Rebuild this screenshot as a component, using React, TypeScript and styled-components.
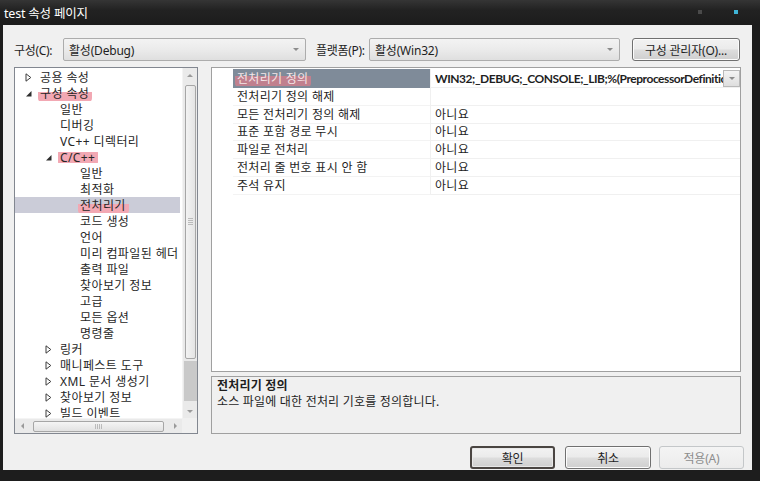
import React from "react";
import styled, { createGlobalStyle, css } from "styled-components";

const Global = createGlobalStyle`
  html, body { margin: 0; padding: 0; background: #1d1d1d; }
  body { width: 760px; height: 481px; overflow: hidden; }
  * { box-sizing: border-box; }
`;

const UI_FONT = `"Noto Sans", "Noto Sans CJK KR", sans-serif`;

const Window = styled.div`
  width: 760px;
  height: 481px;
  display: flex;
  flex-direction: column;
  background: #1d1d1d;
  font-family: ${UI_FONT};
  font-size: 12px;
  color: #1e1e1e;
`;

const TitleBar = styled.div`
  height: 25px;
  flex: none;
  display: flex;
  align-items: center;
  padding: 0 0 1px 4px;
  background: linear-gradient(#353535, #222 40%, #1c1c1c);
  color: #fff;
  font-size: 12.5px;
  letter-spacing: -0.2px;
`;

const TitleText = styled.span`
  flex: 1;
`;

const TitleDot = styled.span<{ $tone: string; $gap: number }>`
  width: 4px;
  height: 4px;
  margin-right: ${(p) => p.$gap}px;
  background: ${(p) => p.$tone};
`;

const Body = styled.div`
  height: 445px;
  flex: none;
  margin: 0 8px 0 3px;
  background: #f0f0f0;
  padding: 13px 11px 0 11px;
  display: flex;
  flex-direction: column;
`;

const TopRow = styled.div`
  height: 23px;
  display: flex;
  align-items: center;
`;

const Label = styled.span<{ $w: number; $lead?: number }>`
  width: ${(p) => p.$w}px;
  padding-left: ${(p) => p.$lead ?? 0}px;
  flex: none;
  white-space: nowrap;
  letter-spacing: -0.3px;
`;

const Combo = styled.div<{ $w: number }>`
  width: ${(p) => p.$w}px;
  height: 23px;
  flex: none;
  display: flex;
  align-items: center;
  padding: 0 6px 0 5px;
  border: 1px solid #acacac;
  border-radius: 2px;
  background: linear-gradient(#f3f3f3, #ebebeb 50%, #dfdfdf);
  letter-spacing: -0.2px;
`;

const ComboText = styled.span`
  flex: 1;
`;

const SmallArrow = styled.span`
  width: 0;
  height: 0;
  border-left: 3px solid transparent;
  border-right: 3px solid transparent;
  border-top: 3px solid #8c8c8c;
`;

const PushButton = styled.div<{ $w: number; $default?: boolean; $disabled?: boolean; $lead?: number }>`
  width: ${(p) => p.$w}px;
  height: 23px;
  flex: none;
  margin-left: ${(p) => p.$lead ?? 0}px;
  display: flex;
  align-items: center;
  justify-content: center;
  border: 1px solid #707070;
  border-radius: 3px;
  background: linear-gradient(#f2f2f2, #ebebeb 48%, #dddddd 52%, #cfcfcf);
  box-shadow: inset 0 0 0 1px #fcfcfc;
  letter-spacing: -0.2px;
  ${(p) =>
    p.$default &&
    css`
      border: 2px solid #4a4542;
      box-shadow: inset 0 0 0 1px #e8e8e8;
    `}
  ${(p) =>
    p.$disabled &&
    css`
      border-color: #c4c7c9;
      background: linear-gradient(#f4f4f4, #ececec);
      box-shadow: none;
      color: #8d8d8d;
    `}
`;

const Main = styled.div`
  margin-top: 6px;
  height: 367px;
  display: flex;
  gap: 13px;
`;

/* ---------- tree ---------- */

const TreeBox = styled.div`
  width: 184px;
  flex: none;
  border: 1px solid #828790;
  background: #fff;
  display: grid;
  grid-template-columns: 1fr 15px;
  grid-template-rows: 1fr 15px;
`;

const TreeList = styled.div`
  overflow: hidden;
  padding-top: 1px;
`;

const TreeRow = styled.div<{ $level: number; $selected?: boolean }>`
  height: 16px;
  display: flex;
  align-items: center;
  padding-left: ${(p) => 10 + p.$level * 20}px;
  margin-right: 2px;
  white-space: nowrap;
  color: #262626;
  letter-spacing: 0.4px;
  background: ${(p) => (p.$selected ? "#cbccd8" : "transparent")};
`;

const Toggle = styled.span`
  width: 15px;
  height: 16px;
  flex: none;
  display: flex;
  align-items: center;
`;

const Marked = styled.span<{ $band: string }>`
  border-radius: 4px;
  margin-left: -2px;
  padding: 0 3px 0 2px;
  background: ${(p) => p.$band};
`;

const VScroll = styled.div`
  background: #eaeaea;
  display: flex;
  flex-direction: column;
  align-items: center;
  border-left: 1px solid #f4f4f4;
`;

const ScrollArrow = styled.div`
  height: 15px;
  width: 15px;
  flex: none;
  display: flex;
  align-items: center;
  justify-content: center;
`;

const VThumb = styled.div`
  margin-top: 2px;
  width: 11px;
  height: 274px;
  flex: none;
  border: 1px solid #a6a6a6;
  border-radius: 2px;
  background: linear-gradient(90deg, #f3f3f3, #e4e4e4);
  display: flex;
  align-items: center;
  justify-content: center;
`;

const VTrackPressed = styled.div`
  width: 13px;
  flex: 1;
  background: #c9c9c9;
  margin: 2px 0;
`;

const HScroll = styled.div`
  background: #eaeaea;
  display: flex;
  align-items: center;
  border-top: 1px solid #f4f4f4;
`;

const HThumb = styled.div`
  margin-left: 3px;
  width: 131px;
  height: 11px;
  border: 1px solid #a6a6a6;
  border-radius: 2px;
  background: linear-gradient(#f5f5f5, #e2e2e2);
  display: flex;
  align-items: center;
  justify-content: center;
`;

const HSpacer = styled.span`
  flex: 1;
`;

const Grip = styled.span<{ $vertical?: boolean }>`
  width: ${(p) => (p.$vertical ? 5 : 8)}px;
  height: ${(p) => (p.$vertical ? 8 : 5)}px;
  background: repeating-linear-gradient(
    ${(p) => (p.$vertical ? "180deg" : "90deg")},
    #9a9a9a 0 1px,
    transparent 1px 2px
  );
  opacity: 0.6;
`;

const Corner = styled.div`
  background: #f0f0f0;
`;

/* ---------- property grid ---------- */

const RightCol = styled.div`
  flex: 1;
  display: flex;
  flex-direction: column;
  gap: 4px;
`;

const GridBox = styled.div`
  height: 305px;
  flex: none;
  border: 1px solid #a0a0a0;
  background: #fff;
  padding-top: 1px;
`;

const PropRow = styled.div`
  height: 17.8px;
  display: grid;
  grid-template-columns: 21px 198px 1fr;
`;

const Gutter = styled.div`
  background: #fff;
`;

const NameCell = styled.div<{ $selected?: boolean }>`
  display: flex;
  align-items: center;
  padding-left: 4px;
  white-space: nowrap;
  letter-spacing: 0.3px;
  border-bottom: 1px solid #f3f3f3;
  border-right: 1px solid #f0f0f0;
  ${(p) =>
    p.$selected &&
    css`
      background: #7f8b99;
      color: #f4e6e8;
      border-bottom-color: #7f8b99;
    `}
`;

const ValueCell = styled.div<{ $strong?: boolean }>`
  display: flex;
  align-items: center;
  padding-left: 4px;
  white-space: nowrap;
  overflow: hidden;
  border-bottom: 1px solid #f0f0f0;
  letter-spacing: 0.3px;
  ${(p) =>
    p.$strong &&
    css`
      font-family: Lato, "Noto Sans", sans-serif;
      font-weight: 700;
      font-size: 12px;
      letter-spacing: -0.45px;
    `}
`;

const ValueText = styled.span`
  flex: 1;
  overflow: hidden;
`;

const CellDrop = styled.span`
  width: 17px;
  height: 17px;
  flex: none;
  display: flex;
  align-items: center;
  justify-content: center;
  border: 1px solid #b9b9b9;
  background: linear-gradient(#f4f4f4, #dedede);
`;

const DescBox = styled.div`
  height: 58px;
  flex: none;
  border: 1px solid #a0a0a0;
  background: #f0f0f0;
  padding: 1px 5px;
  line-height: 16px;
`;

const DescTitle = styled.div`
  font-weight: 700;
  letter-spacing: 0.2px;
`;

const DescText = styled.div`
  letter-spacing: 0.2px;
`;

const ButtonRow = styled.div`
  margin: 12px -3px 0 0;
  display: flex;
  justify-content: flex-end;
  gap: 10px;
`;

const Spacer = styled.span<{ $w: number }>`
  width: ${(p) => p.$w}px;
  flex: none;
`;

/* ---------- small drawings ---------- */

const Collapsed = () => (
  <svg width="7" height="9" viewBox="0 0 7 9">
    <path d="M1 0.8 L5.8 4.5 L1 8.2 Z" fill="#fff" stroke="#3c3c3c" strokeWidth="1" />
  </svg>
);

const Expanded = () => (
  <svg width="7" height="9" viewBox="0 0 7 9">
    <path d="M6.5 2 L6.5 7.5 L1 7.5 Z" fill="#2e2e2e" />
  </svg>
);

const TinyArrow = ({ dir }: { dir: "up" | "down" | "left" | "right" }) => {
  const d = {
    up: "M1 5 L4 2 L7 5 Z",
    down: "M1 3 L4 6 L7 3 Z",
    left: "M5 1 L2 4 L5 7 Z",
    right: "M3 1 L6 4 L3 7 Z",
  }[dir];
  return (
    <svg width="8" height="8" viewBox="0 0 8 8">
      <path d={d} fill="#9a9a9a" />
    </svg>
  );
};

type Node = {
  label: string;
  level: number;
  toggle?: "open" | "closed";
  selected?: boolean;
  band?: string;
};

const PINK = "#f2a8b3";
const bandLow = `linear-gradient(transparent 45%, ${PINK} 45%, ${PINK} 95%, transparent 95%)`;
const bandMid = `linear-gradient(transparent 15%, ${PINK} 15%, ${PINK} 85%, transparent 85%)`;
const bandOnSlate = "linear-gradient(transparent 40%, #c0808e 40%, #c0808e 95%, transparent 95%)";

const nodes: Node[] = [
  { label: "공용 속성", level: 0, toggle: "closed" },
  { label: "구성 속성", level: 0, toggle: "open", band: bandLow },
  { label: "일반", level: 1 },
  { label: "디버깅", level: 1 },
  { label: "VC++ 디렉터리", level: 1 },
  { label: "C/C++", level: 1, toggle: "open", band: bandMid },
  { label: "일반", level: 2 },
  { label: "최적화", level: 2 },
  { label: "전처리기", level: 2, selected: true, band: bandLow },
  { label: "코드 생성", level: 2 },
  { label: "언어", level: 2 },
  { label: "미리 컴파일된 헤더", level: 2 },
  { label: "출력 파일", level: 2 },
  { label: "찾아보기 정보", level: 2 },
  { label: "고급", level: 2 },
  { label: "모든 옵션", level: 2 },
  { label: "명령줄", level: 2 },
  { label: "링커", level: 1, toggle: "closed" },
  { label: "매니페스트 도구", level: 1, toggle: "closed" },
  { label: "XML 문서 생성기", level: 1, toggle: "closed" },
  { label: "찾아보기 정보", level: 1, toggle: "closed" },
  { label: "빌드 이벤트", level: 1, toggle: "closed" },
];

const props: [string, string][] = [
  ["전처리기 정의", "WIN32;_DEBUG;_CONSOLE;_LIB;%(PreprocessorDefinitions)"],
  ["전처리기 정의 해제", ""],
  ["모든 전처리기 정의 해제", "아니요"],
  ["표준 포함 경로 무시", "아니요"],
  ["파일로 전처리", "아니요"],
  ["전처리 줄 번호 표시 안 함", "아니요"],
  ["주석 유지", "아니요"],
];

export default function App() {
  return (
    <>
      <Global />
      <Window>
        <TitleBar>
          <TitleText>test 속성 페이지</TitleText>
          <TitleDot $tone="#4a4a4a" $gap={32} />
          <TitleDot $tone="#3fb4d6" $gap={22} />
        </TitleBar>
        <Body>
          <TopRow>
            <Label $w={49}>구성(C):</Label>
            <Combo $w={243}>
              <ComboText>활성(Debug)</ComboText>
              <SmallArrow />
            </Combo>
            <Label $w={63} $lead={10}>
              플랫폼(P):
            </Label>
            <Combo $w={251}>
              <ComboText>활성(Win32)</ComboText>
              <SmallArrow />
            </Combo>
            <Spacer $w={12} />
            <PushButton $w={108}>구성 관리자(O)...</PushButton>
          </TopRow>

          <Main>
            <TreeBox>
              <TreeList>
                {nodes.map((n, i) => (
                  <TreeRow key={i} $level={n.level} $selected={n.selected}>
                    <Toggle>
                      {n.toggle === "closed" && <Collapsed />}
                      {n.toggle === "open" && <Expanded />}
                    </Toggle>
                    {n.band ? <Marked $band={n.band}>{n.label}</Marked> : n.label}
                  </TreeRow>
                ))}
              </TreeList>
              <VScroll>
                <ScrollArrow>
                  <TinyArrow dir="up" />
                </ScrollArrow>
                <VThumb>
                  <Grip $vertical />
                </VThumb>
                <VTrackPressed />
                <ScrollArrow>
                  <TinyArrow dir="down" />
                </ScrollArrow>
              </VScroll>
              <HScroll>
                <ScrollArrow>
                  <TinyArrow dir="left" />
                </ScrollArrow>
                <HThumb>
                  <Grip />
                </HThumb>
                <HSpacer />
                <ScrollArrow>
                  <TinyArrow dir="right" />
                </ScrollArrow>
              </HScroll>
              <Corner />
            </TreeBox>

            <RightCol>
              <GridBox>
                {props.map(([name, value], i) => (
                  <PropRow key={i}>
                    <Gutter />
                    <NameCell $selected={i === 0}>
                      {i === 0 ? <Marked $band={bandOnSlate}>{name}</Marked> : name}
                    </NameCell>
                    <ValueCell $strong={i === 0}>
                      <ValueText>{value}</ValueText>
                      {i === 0 && (
                        <CellDrop>
                          <SmallArrow />
                        </CellDrop>
                      )}
                    </ValueCell>
                  </PropRow>
                ))}
              </GridBox>
              <DescBox>
                <DescTitle>전처리기 정의</DescTitle>
                <DescText>소스 파일에 대한 전처리 기호를 정의합니다.</DescText>
              </DescBox>
            </RightCol>
          </Main>

          <ButtonRow>
            <PushButton $w={85} $default>
              확인
            </PushButton>
            <PushButton $w={86}>취소</PushButton>
            <PushButton $w={85} $disabled $lead={-2}>
              적용(A)
            </PushButton>
          </ButtonRow>
        </Body>
      </Window>
    </>
  );
}
